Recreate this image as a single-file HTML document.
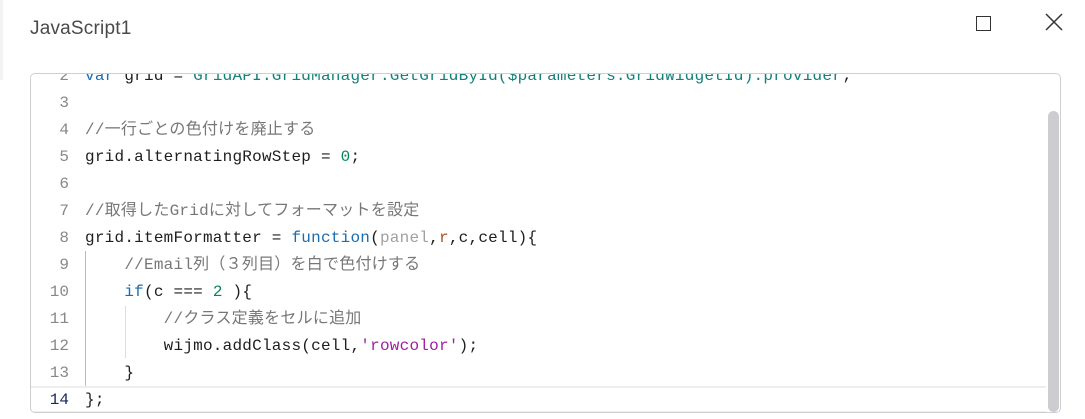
<!DOCTYPE html>
<html><head><meta charset="utf-8"><style>
html,body{margin:0;padding:0;background:#fff;width:1085px;height:419px;overflow:hidden;position:relative}
.strip{position:absolute;left:0;top:0;width:3px;height:80px;background:#f3f3f3}
.title{position:absolute;left:30px;top:18px;font:19px "Liberation Sans","Noto Sans CJK JP",sans-serif;color:#4a4a4a;letter-spacing:0.2px}
.max{position:absolute;left:976px;top:16px;width:13px;height:13px;border:1.5px solid #333}
.close{position:absolute;left:1044px;top:12px;width:20px;height:20px}
.ed{position:absolute;left:30px;top:73px;width:1029px;height:338px;border:1px solid #cfcfcf;border-radius:5px;overflow:hidden}
.ln{position:absolute;left:0;height:27px;width:1010px;font:16px "Liberation Mono","Noto Sans CJK JP",monospace;letter-spacing:0.23px;white-space:pre;color:#1e1e1e}
.n,.c{position:absolute;top:0;height:27px;display:flex;align-items:center;line-height:1}
.n{left:0;width:38px;justify-content:flex-end;color:#888;letter-spacing:0}
.c{left:54px}
.cm{color:#777}.tl{color:#13807a}.kw{color:#1a6db0}.pr{color:#a0a0a0}.or{color:#b05020}.st{color:#a020a0}.nm{color:#098658}
.g1{position:absolute;left:54px;top:177px;width:1px;height:135px;background:#bbb}
.g2{position:absolute;left:94px;top:232px;width:1px;height:52px;background:#ddd}
.hl{position:absolute;left:0;top:312px;width:1015px;height:23px;border-top:2px solid #eee;border-bottom:2px solid #eee}
.sb{position:absolute;left:1017px;top:37px;width:11px;height:301px;background:#cdcdd1;border-radius:6px}
</style></head><body>
<div class="strip"></div>
<div class="title">JavaScript1</div>
<div class="max"></div>
<svg class="close" viewBox="0 0 20 20"><path d="M2 2L18 18M18 2L2 18" stroke="#333" stroke-width="1.5"/></svg>
<div class="ed">
<div class="hl"></div>
<div class="g1"></div><div class="g2"></div>
<div class="ln" style="top:-12px"><span class="n">2</span><span class="c"><span><span class="kw">var</span> grid = <span class="tl">GridAPI.GridManager.GetGridById($parameters.GridWidgetId).provider</span>;</span></span></div>
<div class="ln" style="top:15px"><span class="n">3</span></div>
<div class="ln" style="top:42px"><span class="n">4</span><span class="c cm"><span>//一行ごとの色付けを廃止する</span></span></div>
<div class="ln" style="top:69px"><span class="n">5</span><span class="c"><span>grid.alternatingRowStep = <span class="nm">0</span>;</span></span></div>
<div class="ln" style="top:96px"><span class="n">6</span></div>
<div class="ln" style="top:123px"><span class="n">7</span><span class="c cm"><span>//取得したGridに対してフォーマットを設定</span></span></div>
<div class="ln" style="top:150px"><span class="n">8</span><span class="c"><span>grid.itemFormatter = <span class="kw">function</span>(<span class="pr">panel</span>,<span class="or">r</span>,c,cell){</span></span></div>
<div class="ln" style="top:177px"><span class="n">9</span><span class="c cm"><span>    //Email列（３列目）を白で色付けする</span></span></div>
<div class="ln" style="top:204px"><span class="n">10</span><span class="c"><span>    <span class="kw">if</span>(c === <span class="nm">2</span> ){</span></span></div>
<div class="ln" style="top:231px"><span class="n">11</span><span class="c cm"><span>        //クラス定義をセルに追加</span></span></div>
<div class="ln" style="top:258px"><span class="n">12</span><span class="c"><span>        wijmo.addClass(cell,<span class="st">'rowcolor'</span>);</span></span></div>
<div class="ln" style="top:285px"><span class="n">13</span><span class="c"><span>    }</span></span></div>
<div class="ln" style="top:312px"><span class="n" style="color:#1a2a5a">14</span><span class="c"><span>};</span></span></div>
<div class="sb"></div>
</div>
</body></html>
